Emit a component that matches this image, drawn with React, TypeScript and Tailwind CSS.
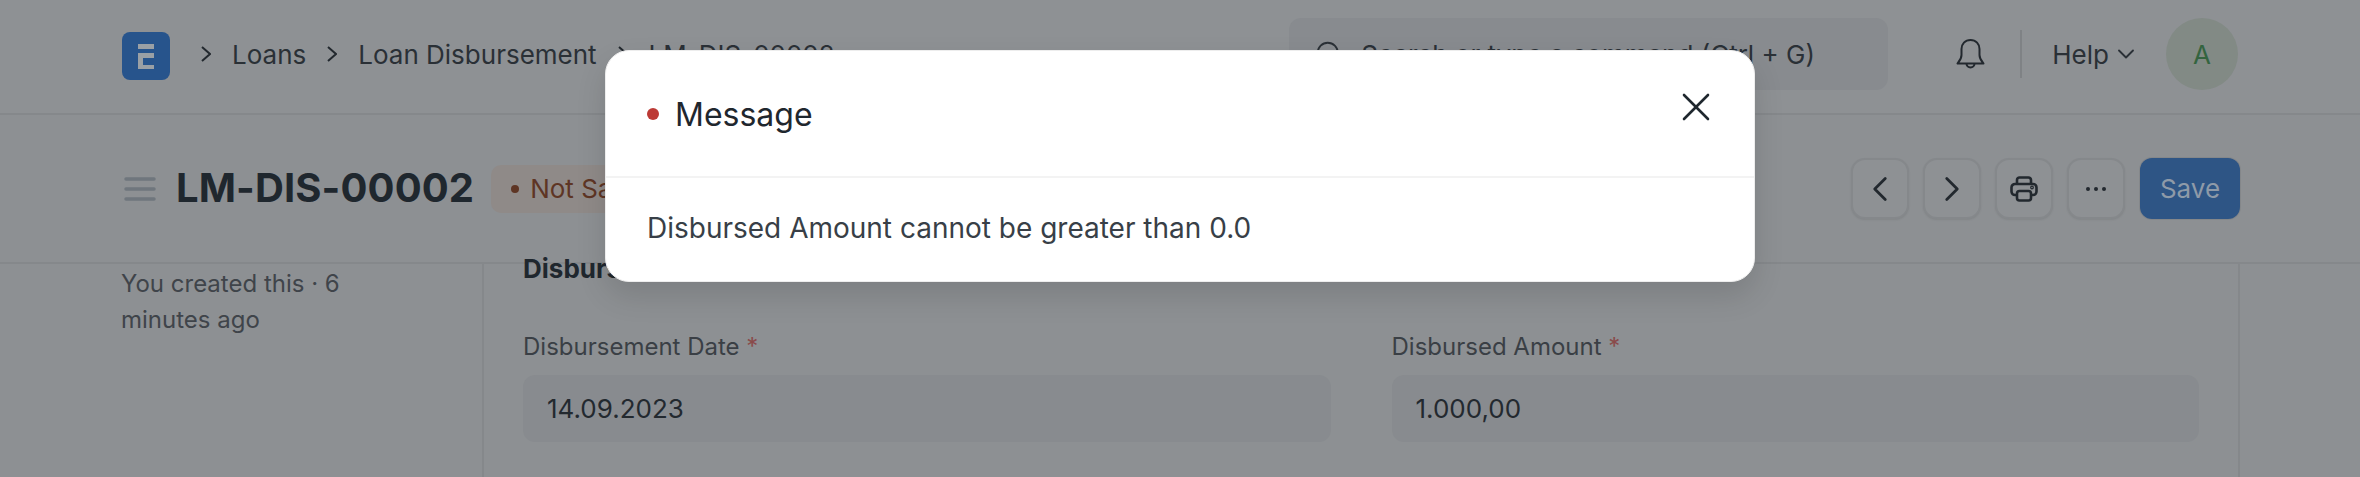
import { ChevronLeft, ChevronRight, ChevronDown, Search, X } from "lucide-react";

const font = "font-['Inter','Liberation_Sans',sans-serif]";

function Crumb({ label }: { label: string }) {
  return (
    <div className="flex items-center">
      <svg width="10" height="16" viewBox="0 0 10 16" fill="none" stroke="#22282e" strokeWidth="2" className="mr-[21px]">
        <path d="M1 1l8 7-8 7" />
      </svg>
      <span className="text-[26px] text-[#2a3036] mr-[21px]">{label}</span>
    </div>
  );
}

function IconButton({ children }: { children: React.ReactNode }) {
  return (
    <button className="w-[58px] h-[61px] rounded-[14px] border-2 border-[#85888b] bg-[#8e9194] shadow-[0_1px_2px_rgba(0,0,0,0.08)] flex items-center justify-center text-[#22282e]">
      {children}
    </button>
  );
}

function Field({ label, value }: { label: string; value: string }) {
  return (
    <div className="flex-1">
      <div className="text-[24px] leading-[36px] text-[#3a3f45] mb-[10px]">
        {label} <span className="text-[#8a4a4a]">*</span>
      </div>
      <div className="h-[67px] rounded-[12px] bg-[#888b8f] flex items-center px-[24px] text-[26px] text-[#23292f]">
        {value}
      </div>
    </div>
  );
}

export default function App() {
  return (
    <div className={`${font} relative w-[2360px] h-[477px] overflow-hidden bg-[#8d9093]`}>
      <header className="h-[115px] pb-[5px] border-b-2 border-[#85888b] bg-[#8e9194] flex items-center pl-[122px] pr-[122px]">
        <div className="w-[48px] h-[48px] mt-[4px] rounded-[8px] bg-[#27548c] flex items-center justify-center mr-[31px]">
          <svg width="16" height="25" viewBox="0 0 16 25" fill="#9aa0a5">
            <rect x="0" y="0" width="16" height="5" />
            <path d="M0 9h16v5H5v7h11v4H0z" />
          </svg>
        </div>
        <Crumb label="Loans" />
        <Crumb label="Loan Disbursement" />
        <Crumb label="LM-DIS-00002" />
        <div className="ml-auto flex items-center">
          <div className="w-[599px] h-[72px] rounded-[12px] bg-[#888b8f] flex items-center pl-[25px] text-[26px] text-[#2a3036] mr-[68px]">
            <Search className="w-[30px] h-[30px] mr-[17px]" strokeWidth={1.5} />
            Search or type a command (Ctrl + G)
          </div>
          <svg width="29" height="32" viewBox="0 0 29 32" fill="none" stroke="#22282e" strokeWidth="2" strokeLinejoin="round" className="mr-[35px]">
            <path d="M14.5 2c-5.5 0-9 4-9 9v6c0 4-2 6-4 8.5h26c-2-2.5-4-4.5-4-8.5v-6c0-5-3.5-9-9-9z" />
            <path d="M10.5 25.5a4 4 0 0 0 8 0" />
          </svg>
          <div className="w-[2px] h-[48px] bg-[#7f8285] mr-[30px]" />
          <span className="text-[26px] text-[#2a3036] mr-[3px]">Help</span>
          <ChevronDown className="w-[28px] h-[28px] text-[#2a3036] mr-[26px]" strokeWidth={1.6} />
          <div className="w-[72px] h-[72px] rounded-full bg-[#828a85] flex items-center justify-center text-[26px] text-[#34643f]">
            A
          </div>
        </div>
      </header>

      <div className="h-[149px] border-b-2 border-[#85888b] flex items-center pl-[122px] pr-[120px]">
        <svg width="34" height="26" viewBox="0 0 34 26" className="mr-[18px] ml-[2px]" fill="none" stroke="#6f767d" strokeWidth="3.5" strokeLinecap="round">
          <path d="M2 3h28M2 13h28M2 23h28" />
        </svg>
        <h1 className="text-[40px] font-bold tracking-[0.12px] text-[#1f272e] -mt-[2px]">LM-DIS-00002</h1>
        <div className="ml-[17px] h-[48px] pl-[20px] pr-[20px] rounded-[10px] bg-[#8f8a88] flex items-center text-[26px] text-[#5e3524]">
          <span className="w-[8px] h-[8px] rounded-full bg-[#5e3524] mr-[11px]" />
          Not Saved
        </div>
        <div className="ml-auto flex items-center gap-[14px]">
          <IconButton><ChevronLeft className="w-[42px] h-[42px]" strokeWidth={1.6} /></IconButton>
          <IconButton><ChevronRight className="w-[42px] h-[42px]" strokeWidth={1.6} /></IconButton>
          <IconButton>
            <svg width="28" height="26" viewBox="0 0 28 26" fill="none" stroke="currentColor" strokeWidth="2.6">
              <path d="M7 8V4a2.5 2.5 0 0 1 2.5-2.5h9A2.5 2.5 0 0 1 21 4v4" />
              <path d="M7 19H5a3.5 3.5 0 0 1-3.500-3.500v-4A3.5 3.5 0 0 1 5 8h18a3.5 3.5 0 0 1 3.5 3.5v4A3.5 3.5 0 0 1 23 19h-2" />
              <rect x="7" y="15" width="14" height="9.5" rx="2.5" />
              <circle cx="22" cy="11.5" r="0.6" />
            </svg>
          </IconButton>
          <IconButton>
            <svg width="20" height="4" viewBox="0 0 20 4" fill="currentColor">
              <circle cx="2" cy="2" r="2" />
              <circle cx="10" cy="2" r="2" />
              <circle cx="18" cy="2" r="2" />
            </svg>
          </IconButton>
          <button className="w-[100px] h-[61px] ml-[1px] rounded-[12px] bg-[#2e5585] shadow-[0_0_0_1px_rgba(0,0,0,0.06)] text-[26px] text-[#8e9aa8]">Save</button>
        </div>
      </div>

      <div className="flex pl-[121px] pr-[120px]">
        <aside className="w-[361px] pt-[2px] text-[24px] leading-[36px] text-[#3f444a]">
          <div className="w-[240px]">You created this · 6 minutes ago</div>
        </aside>
        <main className="flex-1 h-[213px] border-x-2 border-[#85888b] px-[39px]">
          <h2 className="text-[26px] leading-[36px] font-bold text-[#1f272e] -mt-[13px]">Disbursement</h2>
          <div className="flex gap-[61px] mt-[42px]">
            <Field label="Disbursement Date" value="14.09.2023" />
            <Field label="Disbursed Amount" value="1.000,00" />
          </div>
        </main>
      </div>

      <div className="absolute left-[605px] top-[50px] w-[1150px] h-[232px] rounded-[24px] bg-white border border-[#ededed] shadow-[0_14px_30px_rgba(0,0,0,0.12)]">
        <div className="h-[127px] border-b-2 border-[#f3f3f3] flex items-center pl-[41px] pr-[34px]">
          <span className="w-[12px] h-[12px] rounded-full bg-[#bc3a35] mr-[16px]" />
          <span className="text-[32px] text-[#1f272e] mt-[2px]">Message</span>
          <X className="w-[48px] h-[48px] text-[#1f272e] ml-auto -mt-[13px]" strokeWidth={1.3} />
        </div>
        <div className="pl-[41px] pt-[31px] text-[28px] leading-[38px] text-[#383f47]">
          Disbursed Amount cannot be greater than 0.0
        </div>
      </div>
    </div>
  );
}
